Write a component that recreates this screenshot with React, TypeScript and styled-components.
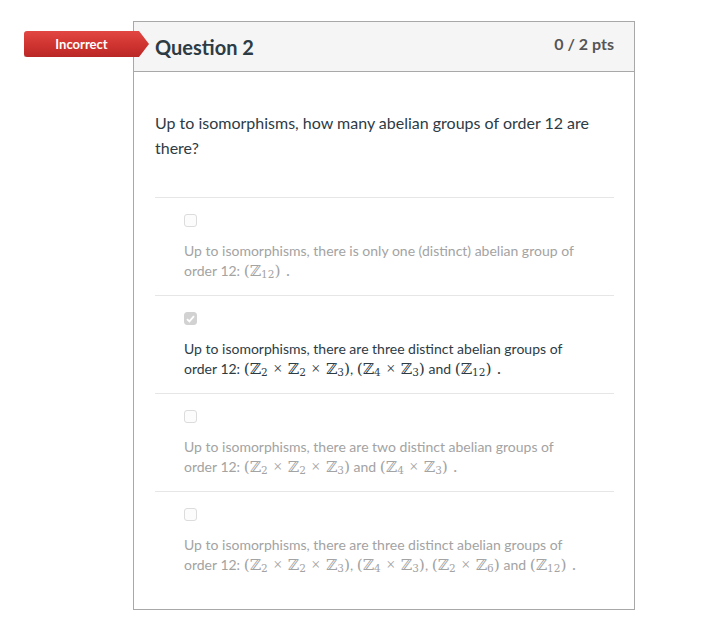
// react
import React from 'react'

// packages
import styled, { createGlobalStyle } from 'styled-components'

// constants
const TEXT = '#2d3b45'
const MUTED = '#a3a3a3'
const RULE = '#e6e6e6'

const GlobalStyle = createGlobalStyle`
  html, body {
    margin: 0;
    padding: 0;
    background: #fff;
  }
  body {
    font-family: Lato, "Open Sans", sans-serif;
    color: ${TEXT};
  }
  * {
    box-sizing: border-box;
  }
`

// styled
const StyledPage = styled.div`
  padding: 21px 0 0 133px;
`

const StyledCard = styled.section`
  border: 1px solid #a8a8a8;
  position: relative;
  width: 502px;
`

const StyledBadge = styled.div`
  align-items: center;
  background: linear-gradient(180deg, #e24744 0%, #cf3330 55%, #b92826 100%);
  border-radius: 3px 0 0 3px;
  box-shadow: 0 1px 1px rgba(0, 0, 0, 0.25);
  clip-path: polygon(0 0, calc(100% - 10px) 0, 100% 50%, calc(100% - 10px) 100%, 0 100%);
  color: #fff;
  display: flex;
  font-size: 13px;
  font-weight: 700;
  height: 26px;
  left: -110px;
  padding-right: 10px;
  position: absolute;
  top: 9px;
  width: 125px;

  span {
    flex: 1;
    margin-top: -1px;
    text-align: center;
  }
`

const StyledHeader = styled.header`
  align-items: center;
  background: #f5f5f5;
  border-bottom: 1px solid #a8a8a8;
  display: flex;
  height: 50px;
  justify-content: space-between;
  padding: 0 20px 0 21px;
`

const StyledTitle = styled.h2`
  color: ${TEXT};
  font-size: 20px;
  font-weight: 700;
  margin: 0;
`

const StyledPoints = styled.div`
  color: #555;
  font-size: 16px;
  font-weight: 700;
  margin-top: -7px;
`

const StyledBody = styled.div`
  padding: 38px 20px 20px 21px;
`

const StyledQuestion = styled.p`
  font-size: 16px;
  line-height: 25px;
  margin: 0 0 37px;
`

const StyledAnswer = styled.div`
  border-top: 1px solid ${RULE};
  color: ${({ $selected }: { $selected: boolean }) => ($selected ? TEXT : MUTED)};
  padding: 16px 26px 14px 29px;
`

const StyledCheckbox = styled.div`
  align-items: center;
  background: ${({ $checked }: { $checked: boolean }) => ($checked ? '#d2d2d2' : '#fcfcfc')};
  border: 1px solid ${({ $checked }: { $checked: boolean }) => ($checked ? '#d2d2d2' : '#dcdcdc')};
  border-radius: 3px;
  display: flex;
  height: 13px;
  justify-content: center;
  margin-bottom: 14px;
  width: 13px;
`

const StyledAnswerText = styled.div`
  font-size: 14px;
  line-height: 20px;
`

const StyledMath = styled.span`
  font-family: "DejaVu Serif", "Liberation Serif", serif;
  font-size: 15.5px;
  line-height: 1;
  white-space: nowrap;

  sub {
    font-size: 10.5px;
    line-height: 0;
    vertical-align: -2px;
  }
`

const StyledTimes = styled.span`
  font-family: "Liberation Serif", serif;
  font-size: 16px;
  padding: 0 1.5px;
`

// helpers
const Z = ({ n }: { n: number }) => (
  <>
    ℤ<sub>{n}</sub>
  </>
)

const Group = ({ parts }: { parts: number[] }) => (
  <StyledMath>
    (
    {parts.map((n, i) => (
      <React.Fragment key={i}>
        {i > 0 ? <StyledTimes> × </StyledTimes> : null}
        <Z n={n} />
      </React.Fragment>
    ))}
    )
  </StyledMath>
)

const Check = () => (
  <svg width='9' height='8' viewBox='0 0 9 8'>
    <polyline points='1,4.2 3.4,6.4 8,1.2' fill='none' stroke='#fff' strokeWidth='1.8' />
  </svg>
)

// data
const ANSWERS = [
  {
    lead: 'Up to isomorphisms, there is only one (distinct) abelian group of order 12:',
    groups: [[12]],
    selected: false,
  },
  {
    lead: 'Up to isomorphisms, there are three distinct abelian groups of order 12:',
    groups: [[2, 2, 3], [4, 3], [12]],
    selected: true,
  },
  {
    lead: 'Up to isomorphisms, there are two distinct abelian groups of order 12:',
    groups: [[2, 2, 3], [4, 3]],
    selected: false,
  },
  {
    lead: 'Up to isomorphisms, there are three distinct abelian groups of order 12:',
    groups: [[2, 2, 3], [4, 3], [2, 6], [12]],
    selected: false,
  },
]

const GroupList = ({ groups }: { groups: number[][] }) => (
  <>
    {groups.map((g, i) => {
      const sep = i === 0 ? ' ' : i === groups.length - 1 ? ' and ' : ', '
      return (
        <React.Fragment key={i}>
          {sep}
          <Group parts={g} />
        </React.Fragment>
      )
    })}
    <StyledMath> .</StyledMath>
  </>
)

export default function App() {
  return (
    <StyledPage>
      <GlobalStyle />
      <StyledCard>
        <StyledBadge>
          <span>Incorrect</span>
        </StyledBadge>
        <StyledHeader>
          <StyledTitle>Question 2</StyledTitle>
          <StyledPoints>0 / 2 pts</StyledPoints>
        </StyledHeader>
        <StyledBody>
          <StyledQuestion>
            Up to isomorphisms, how many abelian groups of order 12 are there?
          </StyledQuestion>
          {ANSWERS.map((a, i) => (
            <StyledAnswer key={i} $selected={a.selected}>
              <StyledCheckbox $checked={a.selected}>{a.selected ? <Check /> : null}</StyledCheckbox>
              <StyledAnswerText>
                {a.lead}
                {a.groups.length === 1 ? ' ' : ''}
                <GroupList groups={a.groups} />
              </StyledAnswerText>
            </StyledAnswer>
          ))}
        </StyledBody>
      </StyledCard>
    </StyledPage>
  )
}
